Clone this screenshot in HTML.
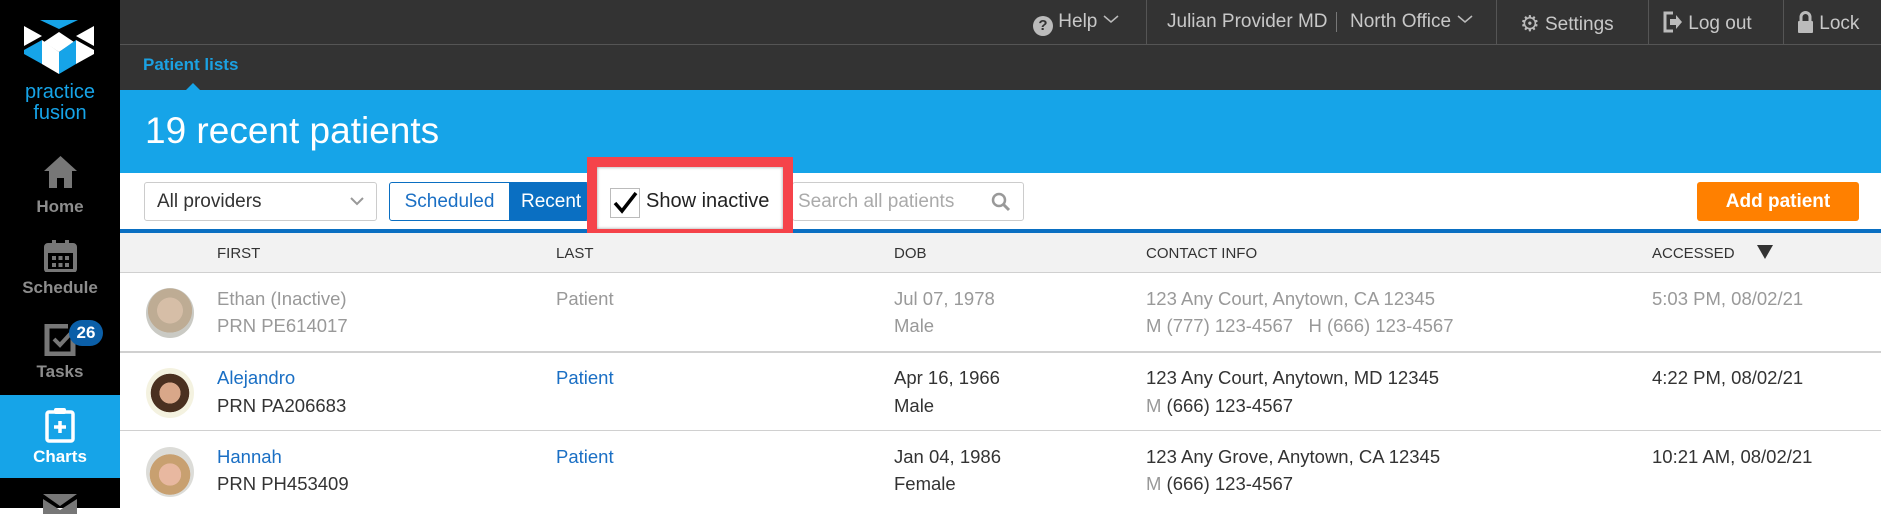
<!DOCTYPE html>
<html><head><meta charset="utf-8"><style>
*{margin:0;padding:0;box-sizing:border-box}
body{width:1881px;height:508px;overflow:hidden;background:#fff;font-family:"Liberation Sans",sans-serif;position:relative}
.a{position:absolute;white-space:nowrap}
#side{left:0;top:0;width:120px;height:508px;background:#000}
.nl{width:120px;text-align:center;color:#8c8c8c;font-size:17px;font-weight:bold}
#top{left:120px;top:0;width:1761px;height:90px;background:#333}
.tt{color:#c8c8c8;font-size:19px;top:11px}
.sep{top:0;width:1px;height:44px;background:#555}
.hd{color:#333;font-size:15px;top:245px}
.t1{font-size:18.5px;color:#333}
.g{color:#999}.b{color:#1a6fc4}
.row{left:120px;width:1761px;height:1px;background:#d0d0d0}
.av{width:48px;height:50px;border-radius:50%;left:146px}
.chev{display:inline-block;vertical-align:3px;margin-left:6px}
</style></head><body>
<div class="a" id="side"></div>
<svg class="a" style="left:24px;top:20px" width="70" height="54" viewBox="0 0 70 54">
<polygon points="16,0 54,0 35,9" fill="#16a4e8"/>
<polygon points="0,6 18,16 0,26" fill="#fff"/><polygon points="70,6 52,16 70,26" fill="#fff"/>
<polygon points="35,12 50,22 35,32 20,22" fill="#fff"/>
<polygon points="0,30 18,20 18,44 0,34" fill="#16a4e8"/><polygon points="18,20 35,32 35,54 18,44" fill="#fff"/>
<polygon points="35,32 52,20 52,44 35,54" fill="#16a4e8"/><polygon points="52,20 70,30 70,34 52,44" fill="#fff"/>
</svg>
<div class="a nl" style="top:82px;color:#16a4e8;font-weight:normal;font-size:20px;line-height:21px">practice<br>fusion</div>
<svg class="a" style="left:44px;top:156px" width="33" height="32" viewBox="0 0 33 32"><path d="M16.5 0 L33 15 L28 15 L28 32 L20 32 L20 22 L13 22 L13 32 L5 32 L5 15 L0 15Z" fill="#777"/></svg>
<div class="a nl" style="top:197px">Home</div>
<svg class="a" style="left:44px;top:240px" width="33" height="32" viewBox="0 0 33 32"><rect x="2" y="5" width="29" height="26" rx="2" fill="none" stroke="#777" stroke-width="4"/><rect x="2" y="5" width="29" height="8" fill="#777"/><rect x="8" y="0" width="4" height="8" fill="#777"/><rect x="21" y="0" width="4" height="8" fill="#777"/><g fill="#777"><rect x="8" y="16" width="4" height="4"/><rect x="14.5" y="16" width="4" height="4"/><rect x="21" y="16" width="4" height="4"/><rect x="8" y="23" width="4" height="4"/><rect x="14.5" y="23" width="4" height="4"/><rect x="21" y="23" width="4" height="4"/></g></svg>
<div class="a nl" style="top:278px">Schedule</div>
<svg class="a" style="left:44px;top:324px" width="33" height="32" viewBox="0 0 33 32"><path d="M24 2 H3 V30 H29 V14" fill="none" stroke="#777" stroke-width="5"/><path d="M10 15 L16 21 L28 8" fill="none" stroke="#777" stroke-width="4"/></svg>
<div class="a" style="left:69px;top:320px;width:34px;height:26px;border-radius:13px;background:#0b5fa8;color:#fff;font-weight:bold;font-size:17px;text-align:center;line-height:26px">26</div>
<div class="a nl" style="top:362px">Tasks</div>
<div class="a" style="left:0;top:395px;width:120px;height:83px;background:#16a4e8"></div>
<svg class="a" style="left:45px;top:407px" width="30" height="36" viewBox="0 0 30 36"><rect x="2" y="5" width="26" height="29" rx="2" fill="none" stroke="#fff" stroke-width="3.5"/><rect x="9" y="1" width="12" height="6" rx="2" fill="#fff"/><path d="M15 14 V26 M9 20 H21" stroke="#fff" stroke-width="3.5"/></svg>
<div class="a nl" style="top:447px;color:#fff">Charts</div>
<svg class="a" style="left:43px;top:494px" width="34" height="20" viewBox="0 0 34 20"><path d="M0 0 H34 L17 12Z" fill="#777"/><path d="M0 5 L17 16 L34 5 V20 H0Z" fill="#777"/></svg>

<div class="a" id="top"></div>
<div class="a" style="left:120px;top:44px;width:1761px;height:1px;background:#555"></div>
<div class="a tt" style="left:1033px"><span style="display:inline-block;width:20px;height:20px;border-radius:10px;background:#bbb;color:#333;font-size:15px;font-weight:bold;text-align:center;line-height:20px;vertical-align:-3px">?</span> Help<svg class="chev" width="16" height="9" viewBox="0 0 16 9"><path d="M1 1 L8 7 L15 1" fill="none" stroke="#bbb" stroke-width="1.5"/></svg></div>
<div class="a sep" style="left:1146px"></div>
<div class="a tt" style="left:1167px">Julian Provider MD</div>
<div class="a" style="left:1336px;top:12px;width:1px;height:20px;background:#777"></div>
<div class="a tt" style="left:1350px">North Office<svg class="chev" width="16" height="9" viewBox="0 0 16 9"><path d="M1 1 L8 7 L15 1" fill="none" stroke="#bbb" stroke-width="1.5"/></svg></div>
<div class="a sep" style="left:1496px"></div>
<div class="a tt" style="left:1520px"><span style="font-size:22px;color:#bbb;vertical-align:-1px">⚙</span> Settings</div>
<div class="a sep" style="left:1648px"></div>
<div class="a tt" style="left:1663px"><svg width="20" height="22" viewBox="0 0 20 22" style="vertical-align:-4px"><path d="M10 2 H2 V20 H10" fill="none" stroke="#bbb" stroke-width="3"/><path d="M7 8 H13 V4 L19 11 L13 18 V14 H7Z" fill="#bbb"/></svg> Log out</div>
<div class="a sep" style="left:1783px"></div>
<div class="a tt" style="left:1797px"><svg width="17" height="22" viewBox="0 0 17 22" style="vertical-align:-4px"><path d="M4 10 V6 A4.5 4.5 0 0 1 13 6 V10" fill="none" stroke="#bbb" stroke-width="3"/><rect x="1" y="10" width="15" height="12" rx="1" fill="#bbb"/></svg> Lock</div>
<div class="a" style="left:143px;top:55px;color:#1ba1e2;font-weight:bold;font-size:17px">Patient lists</div>
<div class="a" style="left:186px;top:83px;width:0;height:0;border-left:7px solid transparent;border-right:7px solid transparent;border-bottom:7px solid #16a4e8"></div>

<div class="a" style="left:120px;top:90px;width:1761px;height:83px;background:#16a4e8"></div>
<div class="a" style="left:145px;top:110px;color:#fff;font-size:37px">19 recent patients</div>

<div class="a" style="left:120px;top:229px;width:1761px;height:4px;background:#0a6fc2"></div>
<div class="a" style="left:144px;top:182px;width:233px;height:39px;border:1px solid #ccc;border-radius:3px;font-size:19px;color:#333;padding:8px 12px">All providers<svg class="a" style="right:12px;top:14px" width="14" height="9" viewBox="0 0 14 9"><path d="M1 1 L7 7 L13 1" fill="none" stroke="#999" stroke-width="2"/></svg></div>
<div class="a" style="left:389px;top:182px;width:200px;height:39px;border:1px solid #0a6fc2;border-radius:3px;overflow:hidden;font-size:19px">
<span class="a" style="left:0;top:0;width:119px;height:37px;color:#1a6fc4;text-align:center;line-height:37px">Scheduled</span>
<span class="a" style="left:119px;top:0;width:80px;height:37px;background:#0a6fc2;color:#fff;padding-left:12px;line-height:37px">Recent</span></div>
<div class="a" style="left:792px;top:182px;width:232px;height:39px;border:1px solid #ccc;border-radius:3px;font-size:19px;color:#aaa;padding:8px 5px">Search all patients<svg class="a" style="right:12px;top:9px" width="20" height="20" viewBox="0 0 20 20"><circle cx="8" cy="8" r="6" fill="none" stroke="#999" stroke-width="2.5"/><path d="M12.5 12.5 L18 18" stroke="#999" stroke-width="3"/></svg></div>
<div class="a" style="left:587px;top:157px;width:206px;height:82px;border:10px solid #f5434a;background:#fff;box-shadow:0 0 3px rgba(0,0,0,.4) inset"></div>
<div class="a" style="left:610px;top:188px;width:30px;height:30px;border:1px solid #bbb;background:#fff"><svg width="28" height="28" viewBox="0 0 28 28"><path d="M4 14 L11 22 L25 4" fill="none" stroke="#000" stroke-width="3.5"/></svg></div>
<div class="a" style="left:646px;top:190px;font-size:20px;color:#222">Show inactive</div>
<div class="a" style="left:1697px;top:182px;width:162px;height:39px;background:#ff8000;border-radius:3px;color:#fff;font-weight:bold;font-size:19px;text-align:center;line-height:39px">Add patient</div>

<div class="a" style="left:120px;top:233px;width:1761px;height:40px;background:#f2f2f2"></div>
<div class="a hd" style="left:217px">FIRST</div>
<div class="a hd" style="left:556px">LAST</div>
<div class="a hd" style="left:894px">DOB</div>
<div class="a hd" style="left:1146px">CONTACT INFO</div>
<div class="a hd" style="left:1652px">ACCESSED</div>
<div class="a" style="left:1757px;top:245px;width:0;height:0;border-left:8px solid transparent;border-right:8px solid transparent;border-top:14px solid #333"></div>
<div class="a row" style="top:272px"></div>
<div class="a row" style="top:351px;height:2px"></div>
<div class="a row" style="top:430px"></div>

<div class="a av" style="top:288px;background:radial-gradient(circle at 50% 45%,#c8a88a 0 35%,#a89070 36% 60%,#b8b8b0 61%);opacity:.75"></div>
<div class="a t1 g" style="left:217px;top:288px">Ethan (Inactive)</div>
<div class="a t1 g" style="left:217px;top:315px">PRN PE614017</div>
<div class="a t1 g" style="left:556px;top:288px">Patient</div>
<div class="a t1 g" style="left:894px;top:288px">Jul 07, 1978</div>
<div class="a t1 g" style="left:894px;top:315px">Male</div>
<div class="a t1 g" style="left:1146px;top:288px">123 Any Court, Anytown, CA 12345</div>
<div class="a t1 g" style="left:1146px;top:315px">M (777) 123-4567 &nbsp;&nbsp;H (666) 123-4567</div>
<div class="a t1 g" style="left:1652px;top:288px">5:03 PM, 08/02/21</div>

<div class="a av" style="top:368px;background:radial-gradient(circle at 50% 50%,#d9a789 0 30%,#4a3020 31% 55%,#f4f2e0 56%)"></div>
<div class="a t1 b" style="left:217px;top:367px">Alejandro</div>
<div class="a t1" style="left:217px;top:395px">PRN PA206683</div>
<div class="a t1 b" style="left:556px;top:367px">Patient</div>
<div class="a t1" style="left:894px;top:367px">Apr 16, 1966</div>
<div class="a t1" style="left:894px;top:395px">Male</div>
<div class="a t1" style="left:1146px;top:367px">123 Any Court, Anytown, MD 12345</div>
<div class="a t1" style="left:1146px;top:395px"><span class="g">M</span> (666) 123-4567</div>
<div class="a t1" style="left:1652px;top:367px">4:22 PM, 08/02/21</div>

<div class="a av" style="top:447px;background:radial-gradient(circle at 50% 55%,#e8b8a0 0 30%,#c8a070 31% 55%,#dcdcd8 56%)"></div>
<div class="a t1 b" style="left:217px;top:446px">Hannah</div>
<div class="a t1" style="left:217px;top:473px">PRN PH453409</div>
<div class="a t1 b" style="left:556px;top:446px">Patient</div>
<div class="a t1" style="left:894px;top:446px">Jan 04, 1986</div>
<div class="a t1" style="left:894px;top:473px">Female</div>
<div class="a t1" style="left:1146px;top:446px">123 Any Grove, Anytown, CA 12345</div>
<div class="a t1" style="left:1146px;top:473px"><span class="g">M</span> (666) 123-4567</div>
<div class="a t1" style="left:1652px;top:446px">10:21 AM, 08/02/21</div>
</body></html>
